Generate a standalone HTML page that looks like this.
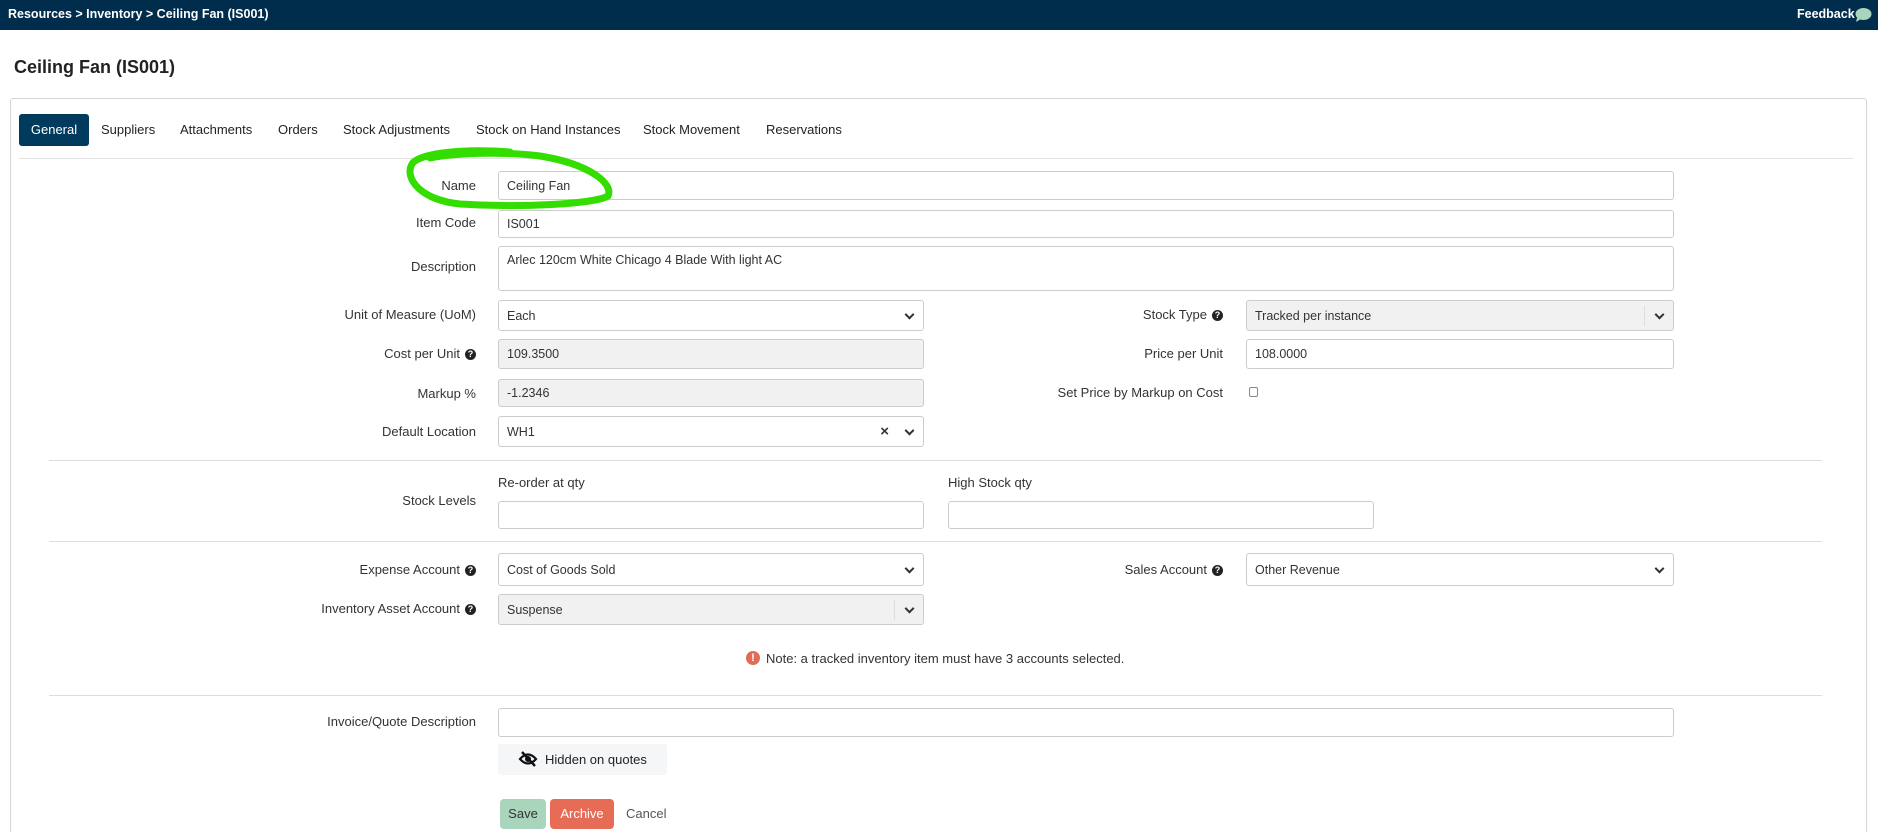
<!DOCTYPE html>
<html><head><meta charset="utf-8"><style>
*{box-sizing:border-box;margin:0;padding:0}
html,body{width:1878px;height:832px;overflow:hidden}
body{background:#fff;font-family:"Liberation Sans",sans-serif;color:#333;font-size:13px;position:relative}
.a{position:absolute}
.bar{left:0;top:0;width:1878px;height:30px;background:#002d4c;color:#fff;font-size:13px}
.lbl{position:absolute;text-align:right;font-size:13px;color:#333;white-space:nowrap}
.in{position:absolute;border:1px solid #ccc;border-radius:3px;background:#fff;font-size:12.5px;padding:0 8px;display:flex;align-items:center;color:#333}
.gray{background:#f1f1f1}
.chev{position:absolute;right:10px;top:50%;width:7px;height:7px;border-right:2px solid #333;border-bottom:2px solid #333;transform:translateY(-70%) rotate(45deg)}
.q{display:inline-block;width:11px;height:11px;border-radius:50%;background:#222;color:#fff;font-size:9px;font-weight:bold;text-align:center;line-height:11px;margin-left:5px;vertical-align:1px}
.sep{position:absolute;height:1px;background:#ddd;left:49px;width:1773px}
.tab{position:absolute;top:114px;height:32px;line-height:32px;font-size:13px;color:#222}
</style></head><body>
<div class="a bar"><span class="a" style="left:8px;top:7px;font-weight:bold;font-size:12.5px">Resources &gt; Inventory &gt; Ceiling Fan (IS001)</span>
<span class="a" style="left:1797px;top:7px;font-weight:bold;font-size:12.5px">Feedback</span>
<svg class="a" style="left:1855px;top:8px" width="17" height="14" viewBox="0 0 17 14"><ellipse cx="8.5" cy="6" rx="8" ry="6" fill="#a8d5bc"/><path d="M2 10 L1 14 L6 11Z" fill="#a8d5bc"/></svg></div>
<div class="a" style="left:14px;top:57px;font-size:18px;font-weight:bold;color:#222">Ceiling Fan (IS001)</div>
<div class="a" style="left:10px;top:98px;width:1857px;height:760px;border:1px solid #d5d5d5;border-radius:3px"></div>
<div class="tab" style="left:19px;width:70px;background:#003a5d;color:#fff;border-radius:3px;text-align:center">General</div>
<div class="tab" style="left:101px">Suppliers</div>
<div class="tab" style="left:180px">Attachments</div>
<div class="tab" style="left:278px">Orders</div>
<div class="tab" style="left:343px">Stock Adjustments</div>
<div class="tab" style="left:476px">Stock on Hand Instances</div>
<div class="tab" style="left:643px">Stock Movement</div>
<div class="tab" style="left:766px">Reservations</div>
<div class="a" style="left:19px;top:158px;width:1834px;height:1px;background:#e3e3e3"></div>

<div class="lbl" style="right:1402px;top:178px">Name</div>
<div class="in" style="left:498px;top:171px;width:1176px;height:29px">Ceiling Fan</div>
<div class="lbl" style="right:1402px;top:215px">Item Code</div>
<div class="in" style="left:498px;top:210px;width:1176px;height:28px">IS001</div>
<div class="lbl" style="right:1402px;top:259px">Description</div>
<div class="in" style="left:498px;top:246px;width:1176px;height:45px;align-items:flex-start;padding-top:6px">Arlec 120cm White Chicago 4 Blade With light AC</div>

<div class="lbl" style="right:1402px;top:307px">Unit of Measure (UoM)</div>
<div class="in" style="left:498px;top:300px;width:426px;height:31px">Each<i class="chev"></i></div>
<div class="lbl" style="right:1402px;top:346px">Cost per Unit<span class="q">?</span></div>
<div class="in gray" style="left:498px;top:339px;width:426px;height:30px">109.3500</div>
<div class="lbl" style="right:1402px;top:386px">Markup %</div>
<div class="in gray" style="left:498px;top:379px;width:426px;height:28px">-1.2346</div>
<div class="lbl" style="right:1402px;top:424px">Default Location</div>
<div class="in" style="left:498px;top:416px;width:426px;height:31px">WH1<span class="a" style="right:34px;top:6px;font-size:15px;font-weight:bold">×</span><i class="chev"></i></div>

<div class="lbl" style="right:655px;top:307px">Stock Type<span class="q">?</span></div>
<div class="in gray" style="left:1246px;top:300px;width:428px;height:31px">Tracked per instance<span class="a" style="right:28px;top:5px;width:1px;height:20px;background:#ddd"></span><i class="chev"></i></div>
<div class="lbl" style="right:655px;top:346px">Price per Unit</div>
<div class="in" style="left:1246px;top:339px;width:428px;height:30px">108.0000</div>
<div class="lbl" style="right:655px;top:385px">Set Price by Markup on Cost</div>
<div class="a" style="left:1249px;top:387px;width:9px;height:10px;border:1px solid #888;border-radius:2px"></div>

<div class="sep" style="top:460px"></div>
<div class="lbl" style="right:1402px;top:493px">Stock Levels</div>
<div class="a" style="left:498px;top:475px;font-size:13px">Re-order at qty</div>
<div class="a" style="left:948px;top:475px;font-size:13px">High Stock qty</div>
<div class="in" style="left:498px;top:501px;width:426px;height:28px"></div>
<div class="in" style="left:948px;top:501px;width:426px;height:28px"></div>
<div class="sep" style="top:541px"></div>

<div class="lbl" style="right:1402px;top:562px">Expense Account<span class="q">?</span></div>
<div class="in" style="left:498px;top:553px;width:426px;height:33px">Cost of Goods Sold<i class="chev"></i></div>
<div class="lbl" style="right:655px;top:562px">Sales Account<span class="q">?</span></div>
<div class="in" style="left:1246px;top:553px;width:428px;height:33px">Other Revenue<i class="chev"></i></div>
<div class="lbl" style="right:1402px;top:601px">Inventory Asset Account<span class="q">?</span></div>
<div class="in gray" style="left:498px;top:594px;width:426px;height:31px">Suspense<span class="a" style="right:28px;top:5px;width:1px;height:20px;background:#ddd"></span><i class="chev"></i></div>

<div class="a" style="left:746px;top:651px;width:14px;height:14px;border-radius:50%;background:#e06c55;color:#fff;font-size:11px;font-weight:bold;text-align:center;line-height:14px">!</div>
<div class="a" style="left:766px;top:651px;font-size:13px">Note: a tracked inventory item must have 3 accounts selected.</div>
<div class="sep" style="top:695px"></div>

<div class="lbl" style="right:1402px;top:714px">Invoice/Quote Description</div>
<div class="in" style="left:498px;top:708px;width:1176px;height:29px"></div>
<div class="a" style="left:498px;top:744px;width:169px;height:31px;background:#f5f6f7;border-radius:3px"></div>
<svg class="a" style="left:518px;top:750px" width="20" height="18" viewBox="0 0 20 18"><path d="M2 9 Q10 0 18 9 Q10 18 2 9Z" fill="none" stroke="#111" stroke-width="2.2"/><circle cx="10" cy="9" r="3" fill="#111"/><path d="M4 2 L17 16" stroke="#111" stroke-width="2.4"/></svg>
<div class="a" style="left:545px;top:752px;font-size:13px;color:#222">Hidden on quotes</div>

<div class="a" style="left:500px;top:799px;width:46px;height:30px;background:#a8d5bc;border-radius:4px;color:#333;text-align:center;line-height:30px">Save</div>
<div class="a" style="left:550px;top:799px;width:64px;height:30px;background:#e76c55;border-radius:4px;color:#fff;text-align:center;line-height:30px">Archive</div>
<div class="a" style="left:626px;top:806px;color:#555">Cancel</div>

<svg class="a" style="left:400px;top:140px" width="220" height="75" viewBox="0 0 220 75"><path d="M110 12 C60 8 18 14 12 24 C4 38 20 60 60 64 C120 68 195 64 208 56 C214 44 190 24 140 16 C110 12 60 12 30 18" fill="none" stroke="#33dd00" stroke-width="7" stroke-linecap="round"/></svg>
</body></html>
